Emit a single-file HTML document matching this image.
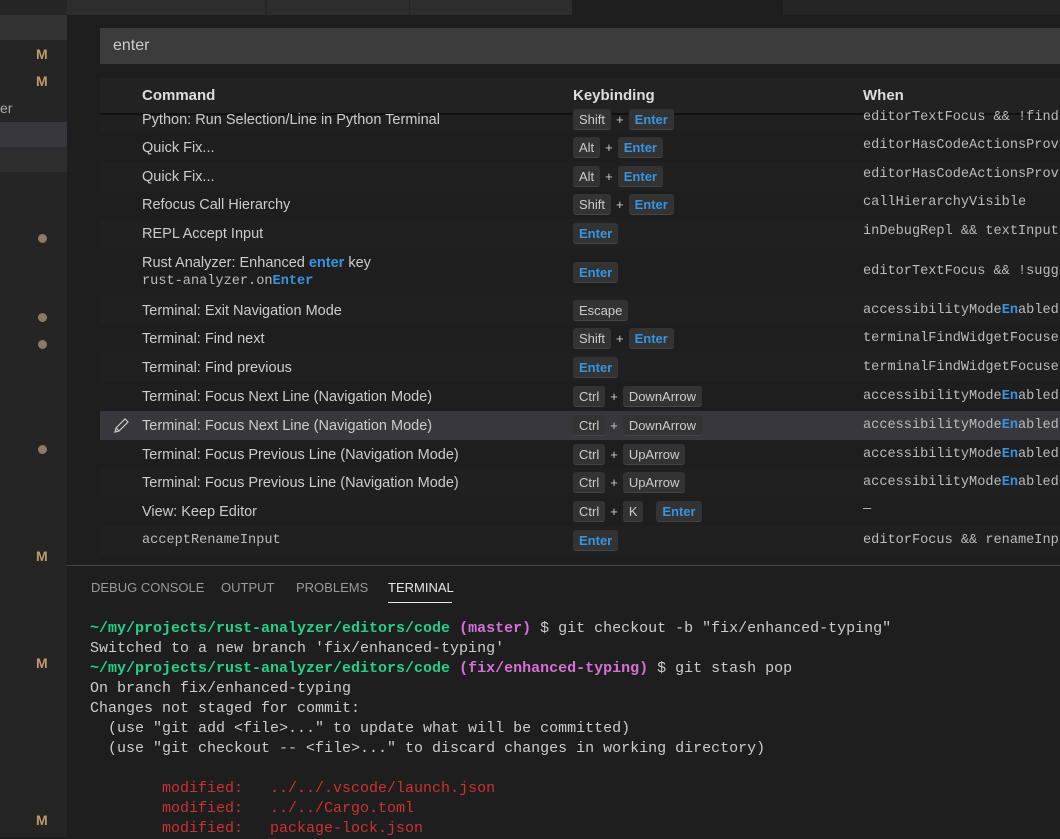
<!DOCTYPE html>
<html><head><meta charset="utf-8"><style>
*{margin:0;padding:0;box-sizing:border-box}
body{width:1060px;height:837px;overflow:hidden;background:#1e1e1e;font-family:"Liberation Sans",sans-serif;color:#ccc;position:relative}
.abs{position:absolute}
.side{left:0;top:0;width:67px;height:837px;background:#252526}
.m{color:#c09a6b;font-weight:bold;font-size:14px;left:36px}
.dot{width:9px;height:9px;border-radius:50%;background:#8a7a66;left:38px}
.row{position:absolute;left:100px;width:960px;height:29px;font-size:14.5px}
.row .c{position:absolute;left:42px;top:7px;color:#ccc;white-space:nowrap}
.row .k{position:absolute;left:473px;top:4px;white-space:nowrap;font-size:13px}
.row .w{position:absolute;left:763px;top:6px;font-family:"Liberation Mono",monospace;font-size:13.6px;color:#bbb;white-space:nowrap}
.kb{display:inline-block;background:#333;border-radius:3px;padding:3px 6px 2px;color:#ccc;border-bottom:1px solid #444;margin-right:2px}
.kb.e{color:#3794e0;font-weight:bold}
.plus{display:inline-block;margin:0 5px 0 3px;color:#ccc}
.alt{background:#202020}
.hl{color:#3794e0}
.term{left:90px;top:619px;font-family:"Liberation Mono",monospace;font-size:15px;line-height:20px;color:#ccc;white-space:pre}
.g{color:#23d18b;font-weight:bold}.p{color:#d670d6;font-weight:bold}.r{color:#cd3131}
</style></head><body>
<div class="abs side"></div>
<div class="abs" style="left:0;top:15px;width:67px;height:25px;background:#333"></div>
<div class="abs" style="left:0;top:122px;width:67px;height:25px;background:#37373d"></div>
<div class="abs" style="left:0;top:147px;width:67px;height:25px;background:#2d2d2d"></div>
<div class="abs m" style="top:46px">M</div>
<div class="abs m" style="top:73px">M</div>
<div class="abs" style="left:0;top:100px;font-size:14px;color:#aaa">er</div>
<div class="abs dot" style="top:234px"></div>
<div class="abs dot" style="top:313px"></div>
<div class="abs dot" style="top:340px"></div>
<div class="abs dot" style="top:445px"></div>
<div class="abs m" style="top:548px">M</div>
<div class="abs m" style="top:655px">M</div>
<div class="abs m" style="top:812px">M</div>
<!-- tabs -->
<div class="abs" style="left:67px;top:0;width:993px;height:15px;background:#252526"></div>
<div class="abs" style="left:67px;top:0;width:198px;height:15px;background:#2d2d2d"></div>
<div class="abs" style="left:267px;top:0;width:142px;height:15px;background:#2d2d2d"></div>
<div class="abs" style="left:410px;top:0;width:162px;height:15px;background:#2d2d2d"></div>
<div class="abs" style="left:572px;top:0;width:211px;height:15px;background:#1e1e1e"></div>
<!-- search -->
<div class="abs" style="left:100px;top:28px;width:960px;height:36px;background:#3c3c3c;font-size:16px;color:#ccc;padding:9px 0 0 13px">enter</div>
<!-- header -->
<div class="abs" style="left:100px;top:78px;width:960px;height:35px;background:#222;font-weight:bold;font-size:15px;color:#ddd">
<span class="abs" style="left:42px;top:9px">Command</span><span class="abs" style="left:473px;top:9px">Keybinding</span><span class="abs" style="left:763px;top:9px">When</span></div>
<div class="abs" style="left:100px;top:113px;width:960px;height:2px;background:#111"></div>
<div class="row alt" style="top:115px;height:18px"><span class="c" style="top:-3px">Python: Run Selection/Line in Python Terminal</span><span class="k" style="top:-6px"><span class="kb">Shift</span><span class="plus">+</span><span class="kb e">Enter</span></span><span class="w" style="top:-5px">editorTextFocus &amp;&amp; !find</span></div>
<div class="row" style="top:133px"><span class="c">Quick Fix...</span><span class="k"><span class="kb">Alt</span><span class="plus">+</span><span class="kb e">Enter</span></span><span class="w" style="top:5px">editorHasCodeActionsProv</span></div>
<div class="row alt" style="top:162px"><span class="c">Quick Fix...</span><span class="k"><span class="kb">Alt</span><span class="plus">+</span><span class="kb e">Enter</span></span><span class="w" style="top:5px">editorHasCodeActionsProv</span></div>
<div class="row" style="top:190px"><span class="c">Refocus Call Hierarchy</span><span class="k"><span class="kb">Shift</span><span class="plus">+</span><span class="kb e">Enter</span></span><span class="w" style="top:5px">callHierarchyVisible</span></div>
<div class="row alt" style="top:219px"><span class="c">REPL Accept Input</span><span class="k"><span class="kb e">Enter</span></span><span class="w" style="top:5px">inDebugRepl &amp;&amp; textInput</span></div>
<div class="row" style="top:248px;height:48px"><span class="c">Rust Analyzer: Enhanced <b class="hl">enter</b> key</span><span class="c" style="top:26px;font-family:'Liberation Mono',monospace;font-size:13.6px;color:#bbb">rust-analyzer.on<b class="hl">Enter</b></span><span class="k" style="top:14px"><span class="kb e">Enter</span></span><span class="w" style="top:16px">editorTextFocus &amp;&amp; !sugg</span></div>
<div class="row alt" style="top:296px"><span class="c">Terminal: Exit Navigation Mode</span><span class="k"><span class="kb">Escape</span></span><span class="w" style="top:7px">accessibilityMode<b class="hl">En</b>abled</span></div>
<div class="row" style="top:324px"><span class="c">Terminal: Find next</span><span class="k"><span class="kb">Shift</span><span class="plus">+</span><span class="kb e">Enter</span></span><span class="w" style="top:7px">terminalFindWidgetFocuse</span></div>
<div class="row alt" style="top:353px"><span class="c">Terminal: Find previous</span><span class="k"><span class="kb e">Enter</span></span><span class="w" style="top:7px">terminalFindWidgetFocuse</span></div>
<div class="row" style="top:382px"><span class="c">Terminal: Focus Next Line (Navigation Mode)</span><span class="k"><span class="kb">Ctrl</span><span class="plus">+</span><span class="kb">DownArrow</span></span><span class="w" style="top:7px">accessibilityMode<b class="hl">En</b>abled</span></div>
<div class="row" style="top:411px;background:#37373d"><svg class="abs" style="left:12px;top:6px" width="18" height="18" viewBox="0 0 18 18"><path d="M3 15 L4 11 L13 2 L16 5 L7 14 Z M4 11 L7 14" fill="none" stroke="#ccc" stroke-width="1.2"/></svg><span class="c">Terminal: Focus Next Line (Navigation Mode)</span><span class="k"><span class="kb">Ctrl</span><span class="plus">+</span><span class="kb">DownArrow</span></span><span class="w" style="top:7px">accessibilityMode<b class="hl">En</b>abled</span></div>
<div class="row" style="top:440px"><span class="c">Terminal: Focus Previous Line (Navigation Mode)</span><span class="k"><span class="kb">Ctrl</span><span class="plus">+</span><span class="kb">UpArrow</span></span><span class="w" style="top:7px">accessibilityMode<b class="hl">En</b>abled</span></div>
<div class="row alt" style="top:468px"><span class="c">Terminal: Focus Previous Line (Navigation Mode)</span><span class="k"><span class="kb">Ctrl</span><span class="plus">+</span><span class="kb">UpArrow</span></span><span class="w" style="top:7px">accessibilityMode<b class="hl">En</b>abled</span></div>
<div class="row" style="top:497px"><span class="c">View: Keep Editor</span><span class="k"><span class="kb">Ctrl</span><span class="plus">+</span><span class="kb">K</span>&nbsp;&nbsp;&nbsp;<span class="kb e">Enter</span></span><span class="w" style="top:5px">—</span></div>
<div class="row alt" style="top:526px"><span class="c" style="font-family:'Liberation Mono',monospace;font-size:13.6px;color:#bbb">acceptRenameInput</span><span class="k"><span class="kb e">Enter</span></span><span class="w" style="top:7px">editorFocus &amp;&amp; renameInp</span></div>
<div class="row" style="top:555px;height:10px;overflow:hidden"></div>
<!-- panel -->
<div class="abs" style="left:67px;top:565px;width:993px;height:272px;background:#1e1e1e;border-top:1px solid #444"></div>
<div class="abs" style="left:91px;top:580px;font-size:13px;color:#999;white-space:nowrap">DEBUG CONSOLE</div>
<div class="abs" style="left:221px;top:580px;font-size:13px;color:#999">OUTPUT</div>
<div class="abs" style="left:296px;top:580px;font-size:13px;color:#999">PROBLEMS</div>
<div class="abs" style="left:388px;top:580px;font-size:13px;color:#e7e7e7">TERMINAL</div>
<div class="abs" style="left:388px;top:602px;width:64px;height:1px;background:#e7e7e7"></div>
<div class="abs term"><span class="g">~/my/projects/rust-analyzer/editors/code</span> <span class="p">(master)</span> $ git checkout -b "fix/enhanced-typing"
Switched to a new branch 'fix/enhanced-typing'
<span class="g">~/my/projects/rust-analyzer/editors/code</span> <span class="p">(fix/enhanced-typing)</span> $ git stash pop
On branch fix/enhanced-typing
Changes not staged for commit:
  (use "git add &lt;file&gt;..." to update what will be committed)
  (use "git checkout -- &lt;file&gt;..." to discard changes in working directory)

        <span class="r">modified:   ../../.vscode/launch.json</span>
        <span class="r">modified:   ../../Cargo.toml</span>
        <span class="r">modified:   package-lock.json</span></div>
</body></html>
